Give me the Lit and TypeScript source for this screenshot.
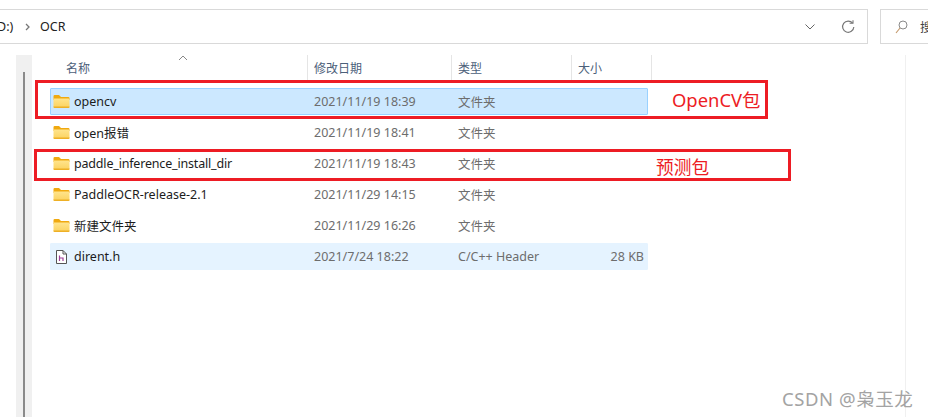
import { LitElement, html, css } from "lit";
import { customElement } from "lit/decorators.js";

const folder = html`<svg class="ico" width="17" height="15" viewBox="0 0 17 15">
  <defs><linearGradient id="fg" x1="0" y1="0" x2="0" y2="1"><stop offset="0" stop-color="#ffe48c"/><stop offset="1" stop-color="#fbd25e"/></linearGradient></defs>
  <path d="M0.5 2.2 Q0.5 1 1.7 1 H6 L8 3 H15.3 Q16.5 3 16.5 4.2 V6 H0.5Z" fill="#f0a90f"/>
  <path d="M0.5 4.5 H15.3 Q16.5 4.5 16.5 5.7 V13 Q16.5 14 15.3 14 H1.7 Q0.5 14 0.5 13Z" fill="url(#fg)"/>
  <path d="M0.5 13 Q0.5 14 1.7 14 H15.3 Q16.5 14 16.5 13 V12.6 H0.5Z" fill="#eeb026"/>
</svg>`;

const file = html`<svg class="ico" width="17" height="15" viewBox="0 0 17 15">
  <path d="M3.5 1.5 H10 L13.5 5 V14.5 H3.5Z" fill="#fff" stroke="#555" stroke-width="1"/>
  <path d="M10 1.5 V5 H13.5" fill="none" stroke="#555" stroke-width="1"/>
  <path d="M6.5 6.5 V12 M6.5 9 H10 V12" fill="none" stroke="#a0409c" stroke-width="1.2"/>
</svg>`;

interface Row { name: string; date: string; type: string; size?: string; icon: unknown; cls?: string; tight?: boolean }
const rows: Row[] = [
  { name: "opencv", date: "2021/11/19 18:39", type: "文件夹", icon: folder, cls: "sel" },
  { name: "open报错", date: "2021/11/19 18:41", type: "文件夹", icon: folder },
  { name: "paddle_inference_install_dir", date: "2021/11/19 18:43", type: "文件夹", icon: folder, tight: true },
  { name: "PaddleOCR-release-2.1", date: "2021/11/29 14:15", type: "文件夹", icon: folder },
  { name: "新建文件夹", date: "2021/11/29 16:26", type: "文件夹", icon: folder },
  { name: "dirent.h", date: "2021/7/24 18:22", type: "C/C++ Header", size: "28 KB", icon: file, cls: "hov" },
];

@customElement("app-root")
export class AppRoot extends LitElement {
  static styles = css`
    :host { display: block; position: relative; width: 928px; height: 417px; overflow: hidden; background: #fff; font-family: "Noto Sans", "Noto Sans CJK SC", sans-serif; }
    .top { display: flex; padding-top: 9px; height: 46px; box-sizing: border-box; }
    .addr { flex: none; width: 868px; height: 35px; box-sizing: border-box; border: 1px solid #d9d9d9; border-left: none; display: flex; align-items: center; font-size: 12.5px; color: #222; overflow: hidden; }
    .crumb { margin-left: -3px; width: 27px; }
    .chev { width: 10px; color: #666; display: flex; }
    .ocr { margin-left: 6px; }
    .grow { flex: 1; }
    .addr-ico { display: flex; }
    .dd { margin-right: 25px; }
    .refresh { margin-right: 12px; }
    .search { flex: none; width: 60px; margin-left: 12px; height: 35px; box-sizing: border-box; border: 1px solid #d9d9d9; border-right: none; display: flex; align-items: center; padding-left: 14px; gap: 12px; font-size: 12.5px; color: #444; overflow: hidden; white-space: nowrap; }
    .search svg { flex: none; }
    .body { display: flex; height: 371px; }
    .track { margin-left: 16px; width: 16px; margin-top: 9px; background: #f0f0f0; padding-top: 17px; box-sizing: border-box; padding-left: 7px; }
    .thumb { width: 2px; height: 100%; background: #8a8a8a; }
    .list { margin-left: 2px; width: 871px; border-right: 1px solid #f0f0f0; margin-top: 9px; }
    .head { display: flex; height: 25px; width: 618px; box-sizing: border-box; font-size: 12px; color: #4c607a; }
    .hc { box-sizing: border-box; border-right: 1px solid #e5e5e5; padding-left: 6px; display: flex; align-items: flex-end; line-height: 17px; padding-bottom: 3px; }
    .h1 { width: 274px; padding-left: 32px; position: relative; }
    .h2 { width: 144px; }
    .h3 { width: 120px; }
    .h4 { width: 80px; }
    .sort { position: absolute; left: 144px; top: 0; }
    .rows { padding: 8px 0 0 16px; display: flex; flex-direction: column; gap: 4px; }
    .row { width: 598px; height: 27px; box-sizing: border-box; display: flex; align-items: center; font-size: 12.5px; color: #6d6d6d; border: 1px solid transparent; border-radius: 1px; }
    .row.sel { background: #cce8ff; border-color: #99d1ff; }
    .row.hov { background: #e5f3ff; border-color: #e5f3ff; }
    .name { width: 263px; display: flex; align-items: center; color: #1c1c1c; padding-left: 2px; box-sizing: border-box; gap: 4px; white-space: nowrap; }
    .tight { letter-spacing: -0.18px; }
    .ico { flex: none; }
    .date { width: 144px; }
    .type { width: 100px; }
    .size { flex: 1; text-align: right; padding-right: 3px; }
    .mark { position: absolute; box-sizing: border-box; border: 3px solid #ed1c24; }
    .m1 { left: 35px; top: 80px; width: 733px; height: 39px; }
    .m2 { left: 34px; top: 149px; width: 757px; height: 32px; }
    .note { position: absolute; color: #ed1c24; line-height: 24px; white-space: nowrap; }
    .n1 { left: 672px; top: 88px; font-size: 18.4px; }
    .n2 { left: 656px; top: 155px; font-size: 17.7px; }
    .wm { position: absolute; left: 782px; top: 387px; font-size: 18.5px; line-height: 24px; color: #a3a3a3; white-space: nowrap; letter-spacing: 0.55px; }
  `;

  render() {
    return html`
      <div class="top">
        <div class="addr">
          <span class="crumb">D:)</span>
          <span class="chev"><svg width="8" height="10" viewBox="0 0 8 10"><path d="M2 2 L5 5 L2 8" fill="none" stroke="#777" stroke-width="1.3"/></svg></span>
          <span class="ocr">OCR</span>
          <span class="grow"></span>
          <span class="addr-ico dd"><svg width="12" height="8" viewBox="0 0 12 8"><path d="M1.5 1.5 L6 6 L10.5 1.5" fill="none" stroke="#666" stroke-width="1"/></svg></span>
          <span class="addr-ico refresh"><svg width="14" height="14" viewBox="0 0 14 14"><path d="M11.6 3.2 A5.6 5.6 0 1 0 12.8 7" fill="none" stroke="#777" stroke-width="1.2"/><path d="M8.6 3.2 H12 V0.3" fill="none" stroke="#777" stroke-width="1.1"/></svg></span>
        </div>
        <div class="search">
          <svg width="13" height="14" viewBox="0 0 13 14"><circle cx="8" cy="5" r="4" fill="none" stroke="#8a8a8a" stroke-width="1"/><path d="M5 8 L1 13" stroke="#c49a6c" stroke-width="1.2"/></svg>
          <span>搜索</span>
        </div>
      </div>
      <div class="body">
        <div class="track"><div class="thumb"></div></div>
        <div class="list">
          <div class="head">
            <div class="hc h1">名称
              <svg class="sort" width="10" height="6" viewBox="0 0 10 6"><path d="M1 5 L5 1 L9 5" fill="none" stroke="#888" stroke-width="1"/></svg>
            </div>
            <div class="hc h2">修改日期</div>
            <div class="hc h3">类型</div>
            <div class="hc h4">大小</div>
          </div>
          <div class="rows">
            ${rows.map(r => html`
              <div class="row ${r.cls ?? ""}">
                <div class="name">${r.icon}<span class="${r.tight ? "tight" : ""}">${r.name}</span></div>
                <div class="date">${r.date}</div>
                <div class="type">${r.type}</div>
                <div class="size">${r.size ?? ""}</div>
              </div>`)}
          </div>
        </div>
      </div>
      <div class="mark m1"></div>
      <div class="mark m2"></div>
      <div class="note n1">OpenCV包</div>
      <div class="note n2">预测包</div>
      <div class="wm">CSDN @枭玉龙</div>
    `;
  }
}
